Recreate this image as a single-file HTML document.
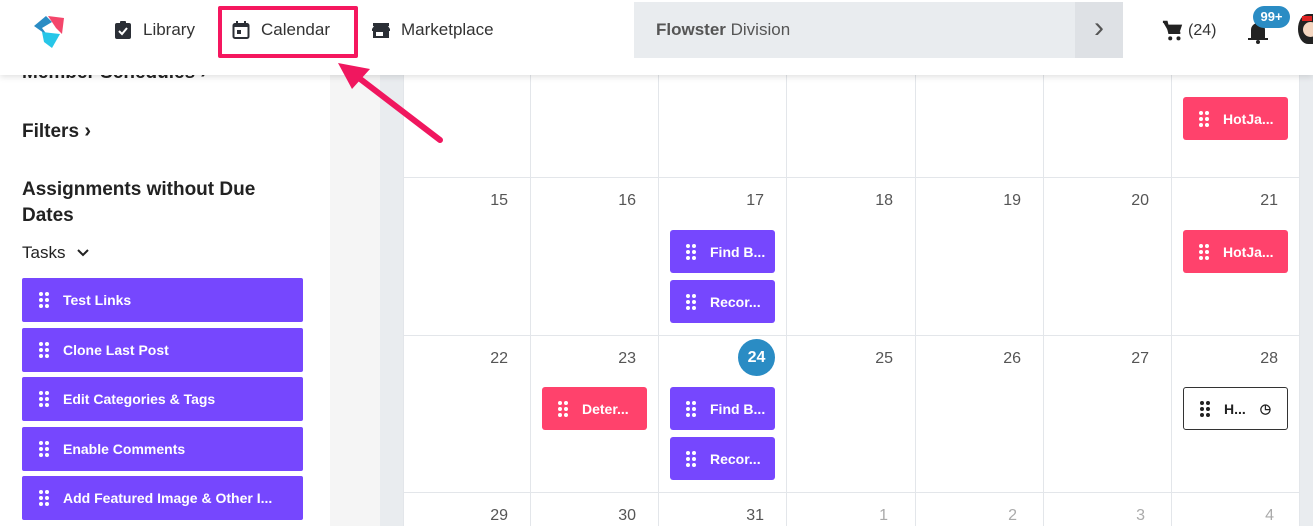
<!DOCTYPE html>
<html><head><style>
*{box-sizing:border-box;margin:0;padding:0}
body{width:1313px;height:526px;overflow:hidden;background:#fff;font-family:"Liberation Sans",sans-serif;position:relative;color:#222}
.hdr{position:absolute;left:0;top:0;width:1313px;height:75px;background:#fff;box-shadow:0 2px 6px rgba(0,0,0,.12);z-index:5}
.nav{position:absolute;top:20px;font-size:17px;color:#333;display:flex;align-items:center;gap:10px}
.side{position:absolute;left:0;top:0;width:330px;height:526px;background:#fff}
.gap1{position:absolute;left:330px;top:0;width:50px;height:526px;background:#f5f5f5}
.gap2{position:absolute;left:380px;top:0;width:23px;height:526px;background:#e9ecef}
.gap3{position:absolute;left:1300px;top:0;width:13px;height:526px;background:#e9ecef}
.cal{position:absolute;left:403px;top:75px;width:897px;height:451px;background:#fff}
.vl{position:absolute;top:75px;width:1px;height:451px;background:#e3e6ea}
.hl{position:absolute;left:403px;width:897px;height:1px;background:#e3e6ea}
.num{position:absolute;font-size:16px;color:#555;text-align:right;width:40px}
.num.g{color:#aaa}
.ev{position:absolute;width:105px;height:43px;border-radius:3px;color:#fff;font-weight:bold;font-size:14px;display:flex;align-items:center;padding-left:16px}
.p{background:#7647fe}.r{background:#ff426c}
.dots{display:inline-grid;grid-template-columns:4px 4px;gap:2px;margin-right:14px}
.dots i{width:4px;height:4px;border-radius:50%;background:currentColor;display:block}
.task{position:absolute;left:22px;width:281px;height:44px;background:#7647fe;border-radius:2px;color:#fff;font-weight:bold;font-size:14px;display:flex;align-items:center;padding-left:17px}
.h{position:absolute;left:22px;font-size:19px;font-weight:bold;color:#222}
</style></head><body>
<div class="side">
<div class="h" style="top:62px">Member Schedules ›</div>
<div class="h" style="top:120px">Filters <span style="font-size:20px">›</span></div>
<div class="h" style="top:177px;line-height:26px">Assignments without Due<br>Dates</div>
<div style="position:absolute;left:22px;top:243px;font-size:17px;color:#222">Tasks <svg style="margin-left:6px" width="14" height="10" viewBox="0 0 14 10"><path d="M2 2 L7 7 L12 2" stroke="#222" stroke-width="2" fill="none"/></svg></div>
<div class="task" style="top:278px"><span class="dots"><i></i><i></i><i></i><i></i><i></i><i></i></span>Test Links</div>
<div class="task" style="top:328px"><span class="dots"><i></i><i></i><i></i><i></i><i></i><i></i></span>Clone Last Post</div>
<div class="task" style="top:377px"><span class="dots"><i></i><i></i><i></i><i></i><i></i><i></i></span>Edit Categories &amp; Tags</div>
<div class="task" style="top:427px"><span class="dots"><i></i><i></i><i></i><i></i><i></i><i></i></span>Enable Comments</div>
<div class="task" style="top:476px"><span class="dots"><i></i><i></i><i></i><i></i><i></i><i></i></span>Add Featured Image &amp; Other I...</div>
</div>
<div class="gap1"></div><div class="gap2"></div><div class="gap3"></div>
<div class="cal"></div>
<div class="vl" style="left:403px"></div><div class="vl" style="left:530px"></div><div class="vl" style="left:658px"></div><div class="vl" style="left:786px"></div><div class="vl" style="left:915px"></div><div class="vl" style="left:1043px"></div><div class="vl" style="left:1171px"></div><div class="vl" style="left:1299px"></div>
<div class="hl" style="top:177px"></div><div class="hl" style="top:335px"></div><div class="hl" style="top:492px"></div>

<div class="num" style="left:468px;top:192px">15</div><div class="num" style="left:596px;top:192px">16</div><div class="num" style="left:724px;top:192px">17</div><div class="num" style="left:853px;top:192px">18</div><div class="num" style="left:981px;top:192px">19</div><div class="num" style="left:1109px;top:192px">20</div><div class="num" style="left:1238px;top:192px">21</div>
<div class="num" style="left:468px;top:350px">22</div><div class="num" style="left:596px;top:350px">23</div>
<div style="position:absolute;left:738px;top:339px;width:37px;height:37px;border-radius:50%;background:#2a8cc4;color:#fff;font-weight:bold;font-size:16px;text-align:center;line-height:37px">24</div>
<div class="num" style="left:853px;top:350px">25</div><div class="num" style="left:981px;top:350px">26</div><div class="num" style="left:1109px;top:350px">27</div><div class="num" style="left:1238px;top:350px">28</div>
<div class="num" style="left:468px;top:507px">29</div><div class="num" style="left:596px;top:507px">30</div><div class="num" style="left:724px;top:507px">31</div><div class="num g" style="left:848px;top:507px">1</div><div class="num g" style="left:977px;top:507px">2</div><div class="num g" style="left:1105px;top:507px">3</div><div class="num g" style="left:1234px;top:507px">4</div>

<div class="ev r" style="left:1183px;top:97px"><span class="dots"><i></i><i></i><i></i><i></i><i></i><i></i></span>HotJa...</div>
<div class="ev p" style="left:670px;top:230px"><span class="dots"><i></i><i></i><i></i><i></i><i></i><i></i></span>Find B...</div>
<div class="ev p" style="left:670px;top:280px"><span class="dots"><i></i><i></i><i></i><i></i><i></i><i></i></span>Recor...</div>
<div class="ev r" style="left:1183px;top:230px"><span class="dots"><i></i><i></i><i></i><i></i><i></i><i></i></span>HotJa...</div>
<div class="ev r" style="left:542px;top:387px"><span class="dots"><i></i><i></i><i></i><i></i><i></i><i></i></span>Deter...</div>
<div class="ev p" style="left:670px;top:387px"><span class="dots"><i></i><i></i><i></i><i></i><i></i><i></i></span>Find B...</div>
<div class="ev p" style="left:670px;top:437px"><span class="dots"><i></i><i></i><i></i><i></i><i></i><i></i></span>Recor...</div>
<div class="ev" style="left:1183px;top:387px;background:#fff;border:1px solid #333;color:#222"><span class="dots"><i></i><i></i><i></i><i></i><i></i><i></i></span>H...<span style="margin-left:14px;font-size:13px">&#9719;</span></div>

<div class="hdr">
<svg style="position:absolute;left:30px;top:12px" width="38" height="38" viewBox="0 0 38 38"><path d="M4 14 L16 4 L22 10 L12 16 L18 24 Z" fill="#2a8cc4"/><path d="M18 4 L34 6 L32 22 L26 16 Z" fill="#f4466b"/><path d="M12 20 L30 22 L22 36 L14 30 Z" fill="#27c6e8"/></svg>
<div class="nav" style="left:113px"><svg width="20" height="20" viewBox="0 0 20 20"><rect x="2" y="3" width="16" height="16" rx="2" fill="#2b2f36"/><rect x="7" y="1" width="6" height="4" rx="1" fill="#2b2f36"/><path d="M6 11 l3 3 l5 -6" stroke="#fff" stroke-width="2" fill="none"/></svg>Library</div>
<div class="nav" style="left:231px"><svg width="20" height="20" viewBox="0 0 20 20"><rect x="2.5" y="4" width="15" height="14" rx="1.5" stroke="#2b2f36" stroke-width="2" fill="none"/><rect x="2.5" y="4" width="15" height="3" fill="#2b2f36"/><rect x="5" y="1" width="2" height="4" fill="#2b2f36"/><rect x="13" y="1" width="2" height="4" fill="#2b2f36"/><rect x="6" y="10" width="4" height="4" fill="#2b2f36"/></svg>Calendar</div>
<div style="position:absolute;left:218px;top:6px;width:140px;height:52px;border:4px solid #f5175f;border-radius:2px"></div>
<div class="nav" style="left:371px"><svg width="20" height="20" viewBox="0 0 20 20"><rect x="2" y="3" width="16" height="3" fill="#2b2f36"/><path d="M1 9 L3 6 H17 L19 9 V11 H1Z" fill="#2b2f36"/><rect x="2" y="11" width="16" height="7" fill="#2b2f36"/><rect x="5" y="12" width="7" height="4" fill="#fff"/></svg>Marketplace</div>
<div style="position:absolute;left:634px;top:2px;width:489px;height:56px;background:#e9ecef"><span style="position:absolute;left:22px;top:18px;font-size:17px;color:#555"><b>Flowster</b> Division</span><div style="position:absolute;right:0;top:0;width:48px;height:56px;background:#dee1e5;color:#555;font-size:30px;text-align:center;line-height:52px">›</div></div>
<div style="position:absolute;left:1162px;top:20px;font-size:16px;color:#333;display:flex;align-items:center;gap:4px"><svg width="22" height="22" viewBox="0 0 24 24"><path d="M1 2h4l1 3h16l-3 9H8Z" fill="#222"/><path d="M1 2h4l3 12h12" stroke="#222" stroke-width="2.5" fill="none"/><circle cx="9" cy="20" r="2.2" fill="#222"/><circle cx="18" cy="20" r="2.2" fill="#222"/></svg>(24)</div>
<svg style="position:absolute;left:1247px;top:20px" width="22" height="24" viewBox="0 0 22 24"><path d="M4 18 V10 a7 7 0 0 1 14 0 V18 H4Z M1 18 H21 V20 H1Z" fill="#222"/><circle cx="11" cy="22" r="2" fill="#222"/></svg>
<div style="position:absolute;left:1253px;top:6px;width:37px;height:22px;border-radius:11px;background:#2a8cc4;color:#fff;font-size:13px;font-weight:bold;text-align:center;line-height:22px">99+</div>
<div style="position:absolute;left:1298px;top:14px;width:20px;height:30px;border-radius:50% 0 0 50%;background:#222"><div style="position:absolute;left:5px;top:8px;width:15px;height:15px;border-radius:50%;background:#f4d6c0"></div><div style="position:absolute;left:4px;top:2px;width:10px;height:5px;background:#d22"></div></div>
</div>
<svg style="position:absolute;left:330px;top:55px;z-index:6" width="120" height="95" viewBox="0 0 120 95"><path d="M110 85 L25 20" stroke="#f0175f" stroke-width="6" stroke-linecap="round"/><path d="M8 8 L40 14 L22 34 Z" fill="#f0175f"/></svg>
</body></html>
